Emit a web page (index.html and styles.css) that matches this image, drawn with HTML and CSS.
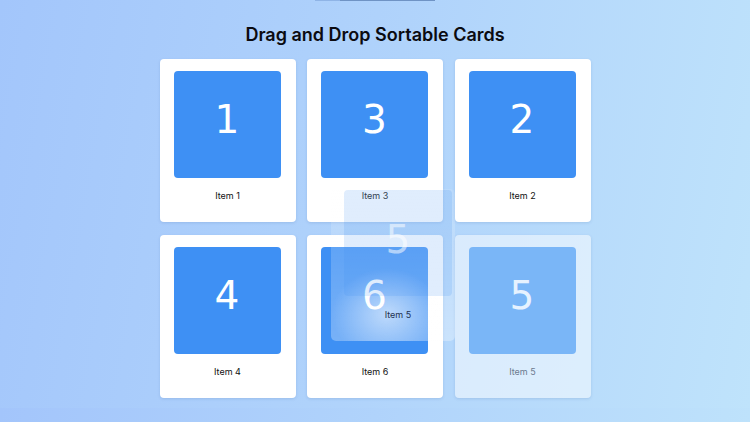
FILE: index.html
```html
<!DOCTYPE html>
<html>
<head>
<meta charset="utf-8">
<link rel="stylesheet" href="styles.css">
</head>
<body>
<div class="page">
  <div class="topbar"><span class="tb-a"></span><span class="tb-b"></span></div>
  <h1 class="title">Drag and Drop Sortable Cards</h1>
  <div class="grid">
    <div class="card"><div class="square">1</div><div class="label">Item 1</div></div>
    <div class="card"><div class="square">3</div><div class="label">Item 3</div></div>
    <div class="card"><div class="square">2</div><div class="label">Item 2</div></div>
    <div class="card"><div class="square">4</div><div class="label">Item 4</div></div>
    <div class="card"><div class="square">6</div><div class="label">Item 6</div></div>
    <div class="card placeholder"><div class="square">5</div><div class="label">Item 5</div></div>
  </div>
  <div class="ghost">
    <div class="ghost-square">5</div>
    <div class="ghost-label">Item 5</div>
  </div>
</div>
<div class="strip"></div>
</body>
</html>
```
FILE: styles.css
```css
html, body {
  margin: 0;
  padding: 0;
}
body {
  width: 750px;
  height: 422px;
  overflow: hidden;
  font-family: "Inter", "Liberation Sans", sans-serif;
  background: linear-gradient(100deg, #a3c6fb 0%, #b0d3fb 50%, #bfe3fb 100%);
}
.page {
  position: relative;
  height: 408px;
  background: linear-gradient(100deg, #a3c6fb 0%, #b0d3fb 50%, #bfe3fb 100%);
}
.strip {
  height: 14px;
  background: linear-gradient(100deg, #a3c5fb 0%, #b0d3fb 50%, #bee2fb 100%);
}
.topbar {
  position: absolute;
  left: 315px;
  top: 0;
  display: flex;
  height: 1px;
}
.tb-a { width: 25px; background: #8fb4e6; }
.tb-b { width: 95px; background: #6f93c4; }
.title {
  margin: 0;
  padding-top: 23px;
  text-align: center;
  font-size: 18px;
  line-height: 24px;
  font-weight: 600;
  color: #0b0b10;
  letter-spacing: 0;
}
.grid {
  margin-top: 12px;
  display: grid;
  grid-template-columns: repeat(3, 136px);
  column-gap: 11.5px;
  row-gap: 13px;
  justify-content: center;
}
.card {
  background: #ffffff;
  border-radius: 4px;
  height: 163px;
  box-sizing: border-box;
  padding: 12px 14px 0;
  box-shadow: 0 1px 3px rgba(60, 100, 160, 0.18);
}
.square {
  width: 107px;
  height: 107px;
  box-sizing: border-box;
  padding-bottom: 11px;
  border-radius: 4px;
  background: #3e90f4;
  color: #ffffff;
  display: flex;
  align-items: center;
  justify-content: center;
  font-family: "DejaVu Sans", sans-serif;
  font-size: 39px;
  font-weight: 400;
}
.label {
  margin-top: 12px;
  text-align: center;
  font-size: 9px;
  line-height: 12px;
  font-weight: 400;
  color: #111;
}
.placeholder {
  background: rgba(255, 255, 255, 0.5);
}
.placeholder .square {
  background: #7ab6f7;
  color: #e6f2ff;
}
.placeholder .label {
  color: #6c7a8e;
}
.ghost {
  position: absolute;
  left: 331px;
  top: 189px;
  width: 124px;
  height: 152px;
  border-radius: 5px;
  background:
    radial-gradient(ellipse 55px 45px at 45% 82%, rgba(255,255,255,0.55), rgba(255,255,255,0) 100%),
    linear-gradient(180deg, rgba(255,255,255,0.1) 0%, rgba(255,255,255,0.3) 100%);
}
.ghost-square {
  position: absolute;
  left: 13px;
  top: 1px;
  width: 108px;
  height: 106px;
  box-sizing: border-box;
  padding-bottom: 8px;
  border-radius: 4px;
  background: rgba(62, 144, 244, 0.16);
  color: rgba(255, 255, 255, 0.55);
  display: flex;
  align-items: center;
  justify-content: center;
  font-family: "DejaVu Sans", sans-serif;
  font-size: 39px;
  font-weight: 400;
}
.ghost-label {
  position: absolute;
  left: 13px;
  top: 120px;
  width: 108px;
  text-align: center;
  font-size: 9px;
  line-height: 12px;
  color: #1d3050;
}
```
